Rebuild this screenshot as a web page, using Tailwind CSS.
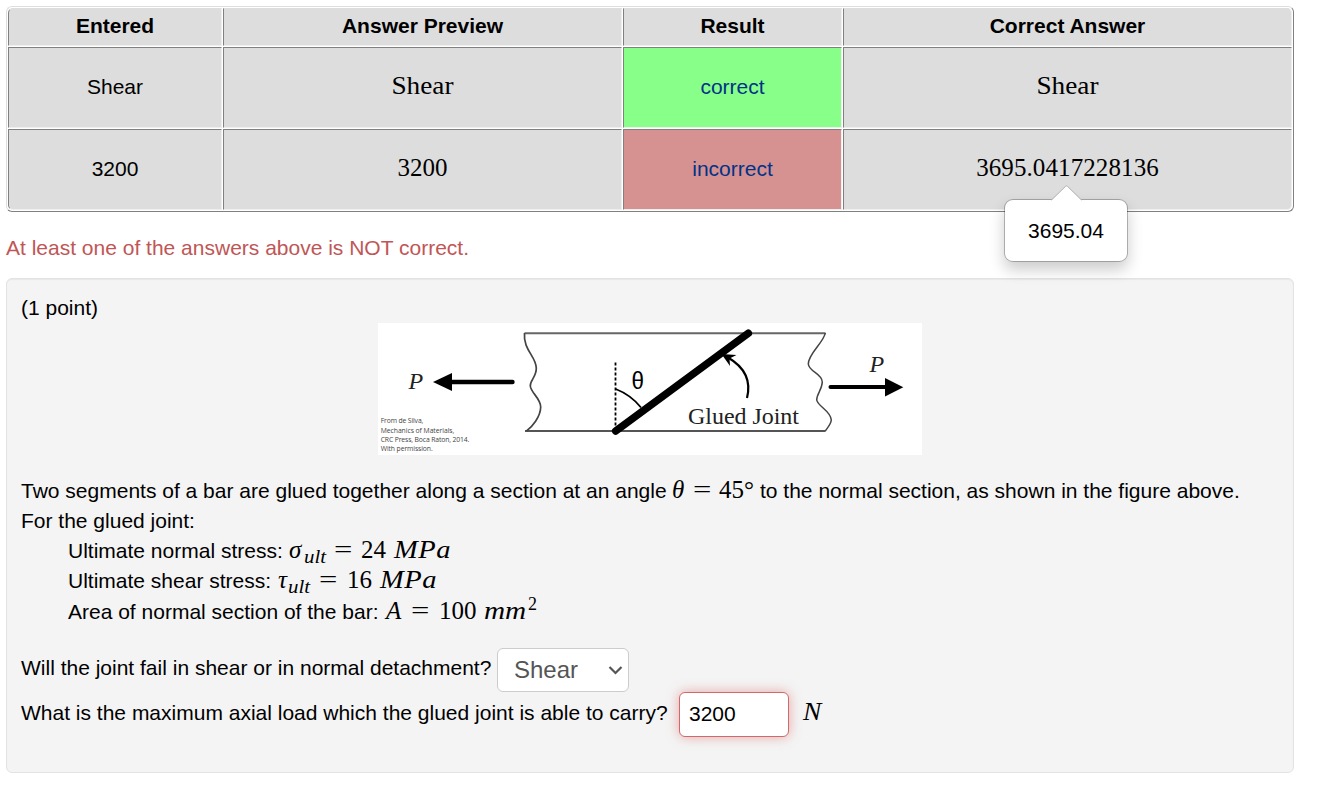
<!DOCTYPE html>
<html lang="en">
<head>
    <meta charset="UTF-8">
    <meta name="viewport" content="width=device-width, initial-scale=1.0">
    <title>Problem - Glued Joint</title>
    <script src="https://cdn.jsdelivr.net/npm/@tailwindcss/browser@4"></script>
</head>
<body class="bg-white text-black font-['Liberation_Sans',Arial,sans-serif] text-[21px] leading-[30px] overflow-hidden">
    <main class="ml-[6px] pt-[6px] w-[1288px]">
        <!-- Results table -->
        <div class="relative">
            <table class="table-fixed w-[1288px] h-[206px] border-separate border-spacing-[1px] border border-t-[#ddd] border-l-[#ddd] border-r-[#808080] border-b-[#808080] rounded-[6px] text-center">
                <colgroup>
                    <col class="w-[214px]">
                    <col class="w-[399px]">
                    <col class="w-[219px]">
                    <col class="w-[449px]">
                </colgroup>
                <thead>
                    <tr class="h-[38px]">
                        <th class="p-0 pb-[2px] bg-[#ddd] border border-t-[#ddd] border-l-[#808080] border-r-[#eee] border-b-[#eee] rounded-tl-[5px]">Entered</th>
                        <th class="p-0 pb-[2px] bg-[#ddd] border border-t-[#ddd] border-l-[#808080] border-r-[#eee] border-b-[#eee]">Answer Preview</th>
                        <th class="p-0 pb-[2px] bg-[#ddd] border border-t-[#ddd] border-l-[#808080] border-r-[#eee] border-b-[#eee]">Result</th>
                        <th class="p-0 pb-[2px] bg-[#ddd] border border-t-[#ddd] border-l-[#808080] border-r-[#eee] border-b-[#eee] rounded-tr-[5px]">Correct Answer</th>
                    </tr>
                </thead>
                <tbody>
                    <tr class="h-[81px]">
                        <td class="p-0 pb-[1px] bg-[#ddd] border border-t-[#808080] border-l-[#808080] border-r-[#eee] border-b-[#eee]">Shear</td>
                        <td class="p-0 pb-[3px] bg-[#ddd] border border-t-[#808080] border-l-[#808080] border-r-[#eee] border-b-[#eee] font-['Liberation_Serif',serif] text-[25px]"><span class="inline-block scale-x-[1.09]">Shear</span></td>
                        <td class="p-0 pb-[1px] bg-[#8f8] border border-t-[#808080] border-l-[#808080] border-r-[#eee] border-b-[#eee] text-[#038]">correct</td>
                        <td class="p-0 pb-[3px] bg-[#ddd] border border-t-[#808080] border-l-[#808080] border-r-[#eee] border-b-[#eee] font-['Liberation_Serif',serif] text-[25px]"><span class="inline-block scale-x-[1.09]">Shear</span></td>
                    </tr>
                    <tr class="h-[81px]">
                        <td class="p-0 pb-[1px] bg-[#ddd] border border-t-[#808080] border-l-[#808080] border-r-[#eee] border-b-[#eee] rounded-bl-[5px]">3200</td>
                        <td class="p-0 pb-[3px] bg-[#ddd] border border-t-[#808080] border-l-[#808080] border-r-[#eee] border-b-[#eee] font-['Liberation_Serif',serif] text-[25px]">3200</td>
                        <td class="p-0 pb-[1px] bg-[#d69191] border border-t-[#808080] border-l-[#808080] border-r-[#eee] border-b-[#eee] text-[#038]">incorrect</td>
                        <td class="p-0 pb-[3px] bg-[#ddd] border border-t-[#808080] border-l-[#808080] border-r-[#eee] border-b-[#eee] rounded-br-[5px] font-['Liberation_Serif',serif] text-[25px] tracking-[0.1px]">3695.0417228136</td>
                    </tr>
                </tbody>
            </table>

            <!-- Popover -->
            <div class="absolute z-10 left-[998px] top-[193px] w-[124px] h-[63px] flex items-center justify-center bg-white border border-black/25 bg-clip-padding rounded-[9px] shadow-[0_8px_15px_rgba(0,0,0,0.2)]">
                <svg class="absolute left-[46px] -top-[15px]" width="32" height="16" viewBox="0 0 32 16">
                    <path d="M0 16 L1 14.5 L14.5 1 Q15.5 0 16.5 1 L30 14.5 L31 16 Z" fill="#fff"/>
                    <path d="M0.5 15 L14.5 1.3 Q15.5 0.5 16.5 1.3 L30.5 15" fill="none" stroke="#aaa" stroke-width="1"/>
                </svg>
                <span>3695.04</span>
            </div>
        </div>

        <p class="mt-[21px] text-[#c05656]">At least one of the answers above is NOT correct.</p>

        <!-- Problem -->
        <section class="mt-[15px] h-[495px] p-[14px] bg-[#f4f4f4] border border-[#e3e3e3] rounded-[6px] shadow-[inset_0_1px_1px_rgba(0,0,0,0.05)] whitespace-nowrap">
            <p>(1 point)</p>
            <svg class="block mx-auto bg-white" width="544" height="132" viewBox="0 0 544 132">
                <!-- bar outline -->
                <path d="M146.5 10.3 H447.5" stroke="#666" stroke-width="2" fill="none"/>
                <path d="M147 108 H447.5" stroke="#555" stroke-width="2" fill="none"/>
                <path d="M146.5 10 C145 27 158 33 158.3 45 C158.5 54 152 57 152.3 63 C153 70 162.5 75 162.7 84 C162.5 94 154 104 148.5 108" stroke="#444" stroke-width="1.7" fill="none"/>
                <path d="M447.3 10 C446 19 430 31 430.3 41 C431 49 444 50 444.3 59 C444 67 438.5 71 438.7 77 C439.5 83 453 88 453.3 97 C453 101 450 104 447.3 108" stroke="#444" stroke-width="1.5" fill="none"/>
                <!-- joint and angle -->
                <path d="M237.5 39.5 V104" stroke="#000" stroke-width="1.8" stroke-dasharray="3 2" fill="none"/>
                <path d="M237.7 66 Q253 72 263 84.5" stroke="#000" stroke-width="1.8" fill="none"/>
                <path d="M237.7 108 L370.3 10.3" stroke="#000" stroke-width="7.6" stroke-linecap="round"/>
                <path d="M369 75 C373 59 368 45 350 34.5" stroke="#000" stroke-width="2.2" fill="none"/>
                <path d="M343.5 31 L358.5 32 L351.5 35.5 L352 43 Z" fill="#000"/>
                <text x="253.5" y="66" class="font-['Liberation_Sans',sans-serif]" font-size="23" textLength="12.5" lengthAdjust="spacingAndGlyphs">θ</text>
                <!-- forces -->
                <path d="M72 59 H134.5" stroke="#000" stroke-width="4.4" stroke-linecap="round"/>
                <path d="M55 59 L74 50 V68 Z" fill="#000"/>
                <path d="M452.5 64 H509" stroke="#000" stroke-width="4" stroke-linecap="round"/>
                <path d="M525.3 64.3 L507 55 V73.5 Z" fill="#000"/>
                <text x="30.5" y="65.5" class="font-['Liberation_Serif',serif] italic" font-size="24" fill="#222">P</text>
                <text x="491.5" y="49.3" class="font-['Liberation_Serif',serif] italic" font-size="24" fill="#222">P</text>
                <text x="310" y="101.3" class="font-['Liberation_Serif',serif]" font-size="24" fill="#222" textLength="111">Glued Joint</text>
                <!-- credit -->
                <g class="font-['Open_Sans',sans-serif]" font-size="6.8" fill="#444">
                    <text x="2.7" y="100.3" textLength="42.6">From de Silva,</text>
                    <text x="2.7" y="109.7" textLength="73.6">Mechanics of Materials,</text>
                    <text x="2.7" y="119" textLength="88.7">CRC Press, Boca Raton, 2014.</text>
                    <text x="2.7" y="128.3" textLength="52">With permission.</text>
                </g>
            </svg>

            <div class="mt-[21px] h-[30px] flex items-baseline">
                <span class="w-[651px]">Two segments of a bar are glued together along a section at an angle</span>
                <span class="flex items-baseline leading-none font-['Liberation_Serif',serif] text-[25px]">
                    <i class="w-[21px]">θ</i>
                    <span class="w-[26px] origin-left scale-x-[1.3]">=</span>
                    <span class="w-[25px]">45</span>
                    <span class="w-[16px]">°</span>
                </span>
                <span>to the normal section, as shown in the figure above.</span>
            </div>
            <p>For the glued joint:</p>
            <div class="pl-[47px]">
                <div class="h-[30px] flex items-baseline">
                    <span class="w-[221px]">Ultimate normal stress:</span>
                    <span class="flex items-baseline leading-none font-['Liberation_Serif',serif] text-[25px]">
                        <i class="w-[15px]">σ</i>
                        <i class="relative top-[5px] w-[30px] text-[19px] origin-left scale-x-[1.1]">ult</i>
                        <span class="w-[27px] origin-left scale-x-[1.3]">=</span>
                        <span class="w-[33px]">24</span>
                        <i class="tracking-[0.5px] origin-left scale-x-[1.14]">MPa</i>
                    </span>
                </div>
                <div class="h-[30px] flex items-baseline">
                    <span class="w-[210px]">Ultimate shear stress:</span>
                    <span class="flex items-baseline leading-none font-['Liberation_Serif',serif] text-[25px]">
                        <i class="w-[10px]">τ</i>
                        <i class="relative top-[5px] w-[31px] text-[19px] origin-left scale-x-[1.1]">ult</i>
                        <span class="w-[28px] origin-left scale-x-[1.3]">=</span>
                        <span class="w-[33px]">16</span>
                        <i class="tracking-[0.5px] origin-left scale-x-[1.14]">MPa</i>
                    </span>
                </div>
                <div class="h-[31px] pt-[1px] flex items-baseline">
                    <span class="w-[318px]">Area of normal section of the bar:</span>
                    <span class="flex items-baseline leading-none font-['Liberation_Serif',serif] text-[25px]">
                        <i class="w-[25px]">A</i>
                        <span class="w-[28px] origin-left scale-x-[1.3]">=</span>
                        <span class="w-[45px]">100</span>
                        <i class="w-[44px] origin-left scale-x-[1.17]">mm</i>
                        <span class="relative -top-[9px] text-[18px]">2</span>
                    </span>
                </div>
            </div>

            <div class="mt-[21px] h-[44px] flex">
                <label for="failure-mode" class="w-[476px] pt-[5px]">Will the joint fail in shear or in normal detachment?</label>
                <div class="relative">
                    <select id="failure-mode" class="appearance-none block w-[132px] h-[44px] pl-[16px] bg-white border border-[#ccc] rounded-[6px] text-[24px] leading-[30px] text-[#555]">
                        <option>Shear</option>
                        <option>Normal</option>
                    </select>
                    <svg class="absolute right-[6px] top-[17px] pointer-events-none" width="15" height="11" viewBox="0 0 15 11" fill="none" stroke="#555" stroke-width="2.2">
                        <path d="M1.5 2 L7.5 8 L13.5 2"/>
                    </svg>
                </div>
            </div>
            <div class="h-[46px] flex">
                <label for="max-load" class="w-[658px] pt-[6px]">What is the maximum axial load which the glued joint is able to carry?</label>
                <input id="max-load" type="text" value="3200" class="block w-[110px] h-[45px] pl-[9px] pb-[1px] bg-white border border-[#d06a6a] rounded-[6px] shadow-[0_0_12px_rgba(220,90,90,0.5)]">
                <i class="ml-[14px] pt-[5px] font-['Liberation_Serif',serif] text-[25px] origin-left scale-x-[1.1]">N</i>
            </div>
        </section>
    </main>
</body>
</html>
